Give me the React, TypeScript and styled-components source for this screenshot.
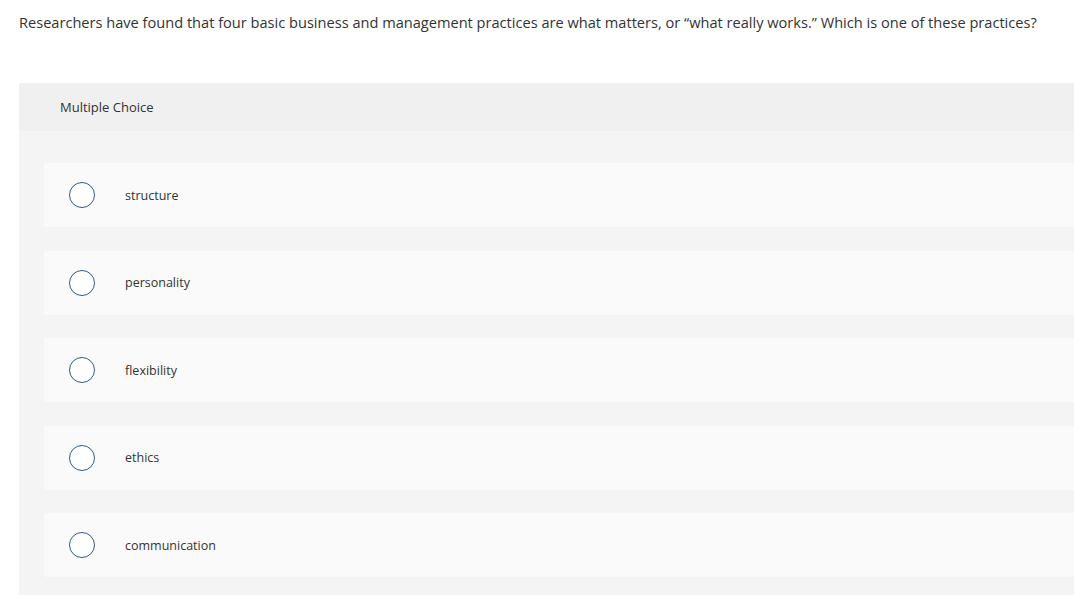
import React from "react";
import styled, { createGlobalStyle } from "styled-components";

const GlobalStyle = createGlobalStyle`
  html, body {
    margin: 0;
    padding: 0;
    background: #fff;
    overflow: hidden;
  }
  body {
    font-family: "Open Sans", "Liberation Sans", sans-serif;
    color: #333;
  }
`;

const options = ["structure", "personality", "flexibility", "ethics", "communication"];

const Page = styled.div`
  width: 1074px;
  height: 595px;
  overflow: hidden;
  padding-left: 19px;
  box-sizing: border-box;
`;

const Prompt = styled.p`
  margin: 0;
  padding-top: 12px;
  height: 83px;
  box-sizing: border-box;
  font-size: 14.6px;
  line-height: 20px;
  color: #333;
`;

const Panel = styled.section`
  width: 1080px;
  background: #f4f4f4;
  padding-bottom: 24px;
`;

const PanelHeader = styled.header`
  height: 48px;
  display: flex;
  align-items: center;
  padding-left: 41px;
  background: #f0f0f0;
  font-size: 13px;
  color: #333;
`;

const OptionList = styled.div`
  display: flex;
  flex-direction: column;
  gap: 23.5px;
  padding: 32px 0 0 25px;
`;

const Option = styled.label`
  height: 64px;
  display: flex;
  align-items: center;
  background: #fafafa;
  border-radius: 3px;
  padding-left: 25px;
  cursor: pointer;
`;

const Radio = styled.span`
  width: 26px;
  height: 26px;
  box-sizing: border-box;
  border-radius: 50%;
  border: 1.5px solid #2c5b8c;
  background: #fff;
  flex: none;
`;

const OptionText = styled.span`
  margin-left: 30px;
  font-size: 12.5px;
  color: #333;
`;

export default function App() {
  return (
    <>
      <GlobalStyle />
      <Page>
        <Prompt>
          Researchers have found that four basic business and management practices are what
          matters, or “what really works.” Which is one of these practices?
        </Prompt>
        <Panel>
          <PanelHeader>Multiple Choice</PanelHeader>
          <OptionList>
            {options.map((o) => (
              <Option key={o}>
                <Radio />
                <OptionText>{o}</OptionText>
              </Option>
            ))}
          </OptionList>
        </Panel>
      </Page>
    </>
  );
}
